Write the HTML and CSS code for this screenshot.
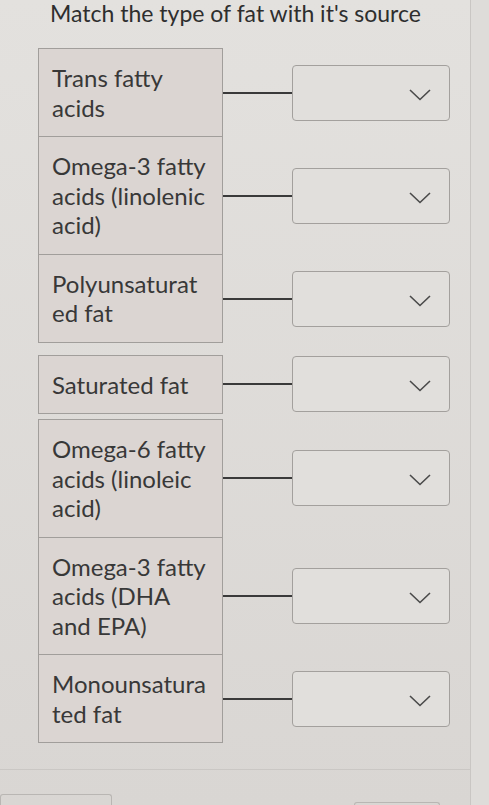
FILE: index.html
```html
<!DOCTYPE html>
<html lang="en">

<head>
    <meta charset="UTF-8">
    <meta name="viewport" content="width=device-width, initial-scale=1.0">
    <title>Match the type of fat</title>
    <link rel="stylesheet" href="styles.css">
</head>

<body>
    <div class="page">
        <h1 class="title">Match the type of fat with it's source</h1>

        <div class="match">
            <div class="row">
                <div class="term">Trans fatty acids</div>
                <div class="wire"></div>
                <div class="select"><svg class="chev" viewBox="0 0 22 12"><polyline points="1,1 11,10.5 21,1" /></svg></div>
            </div>
            <div class="row joined">
                <div class="term">Omega-3 fatty acids (linolenic acid)</div>
                <div class="wire"></div>
                <div class="select"><svg class="chev" viewBox="0 0 22 12"><polyline points="1,1 11,10.5 21,1" /></svg></div>
            </div>
            <div class="row joined">
                <div class="term">Polyunsaturated fat</div>
                <div class="wire"></div>
                <div class="select"><svg class="chev" viewBox="0 0 22 12"><polyline points="1,1 11,10.5 21,1" /></svg></div>
            </div>
            <div class="row apart">
                <div class="term">Saturated fat</div>
                <div class="wire"></div>
                <div class="select"><svg class="chev" viewBox="0 0 22 12"><polyline points="1,1 11,10.5 21,1" /></svg></div>
            </div>
            <div class="row apart-sm">
                <div class="term">Omega-6 fatty acids (linoleic acid)</div>
                <div class="wire"></div>
                <div class="select"><svg class="chev" viewBox="0 0 22 12"><polyline points="1,1 11,10.5 21,1" /></svg></div>
            </div>
            <div class="row joined">
                <div class="term">Omega-3 fatty acids (DHA and EPA)</div>
                <div class="wire"></div>
                <div class="select"><svg class="chev" viewBox="0 0 22 12"><polyline points="1,1 11,10.5 21,1" /></svg></div>
            </div>
            <div class="row joined">
                <div class="term">Monounsaturated fat</div>
                <div class="wire"></div>
                <div class="select"><svg class="chev" viewBox="0 0 22 12"><polyline points="1,1 11,10.5 21,1" /></svg></div>
            </div>
        </div>

        <div class="footer">
            <div class="stub"></div>
            <div class="stub right"></div>
        </div>
    </div>
</body>

</html>
```

FILE: styles.css
```css
body {
    margin: 0;
    background-color: #dedcd9;
    color: #383838;
    font-family: Lato, "Open Sans", sans-serif;
    overflow: hidden;
}

.page {
    height: 805px;
    border-right: 1px solid #c9c6c3;
    width: 470px;
    background: linear-gradient(to bottom, #e3e1de, #d9d6d3);
}

.title {
    margin: 0 0 0 50px;
    padding-top: 1px;
    font-size: 23px;
    font-weight: 400;
    color: #2e2e2e;
    line-height: 24px;
}

/* matching rows */

.match {
    margin-top: 23px;
    padding-left: 38px;
}

.row {
    display: flex;
    align-items: center;
}

.row.apart {
    margin-top: 12px;
}

.row.apart-sm {
    margin-top: 5px;
}

.term {
    box-sizing: border-box;
    width: 185px;
    padding: 14px 14px 14px 13px;
    font-size: 24px;
    line-height: 29.5px;
    background-color: #dbd5d2;
    border: 1.5px solid #a19e9b;
    overflow-wrap: anywhere;
}

.row.joined .term {
    border-top: none;
}

.wire {
    width: 69px;
    height: 2px;
    background-color: #3a3a3a;
}

.select {
    position: relative;
    box-sizing: border-box;
    width: 158px;
    height: 56px;
    border: 1.5px solid #a3a09d;
    border-radius: 4px;
    background-color: #e1dfdc;
}

.chev {
    position: absolute;
    right: 18px;
    top: 23px;
    width: 22px;
    height: 12px;
    fill: none;
    stroke: #4a4a4a;
    stroke-width: 1.6;
}

/* cut-off content at the bottom */

.footer {
    margin-top: 26px;
    border-top: 1px solid #cac7c4;
    height: 37px;
    display: flex;
    justify-content: space-between;
    align-items: flex-end;
}

.stub {
    width: 110px;
    height: 12px;
    border: 1px solid #b9b6b3;
    border-bottom: none;
    border-radius: 3px 3px 0 0;
}

.stub.right {
    width: 84px;
    height: 4px;
    margin-right: 30px;
}
```
